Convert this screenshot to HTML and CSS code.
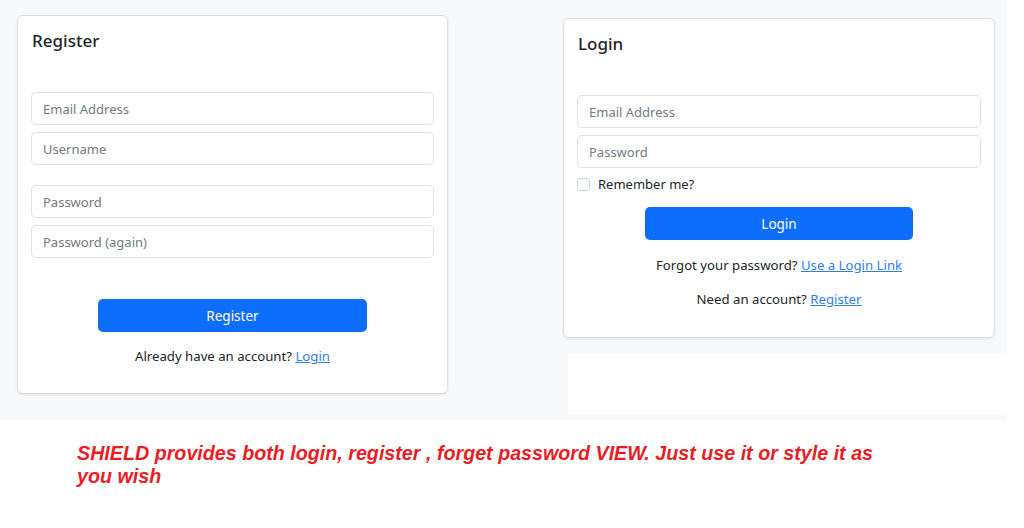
FILE: index.html
```html
<!DOCTYPE html>
<html lang="en">
<head>
    <meta charset="UTF-8">
    <title>Shield auth views</title>
    <link rel="stylesheet" href="styles.css">
</head>
<body>
    <div class="shots">
        <div class="shot shot-left">
            <div class="card card-register">
                <h5 class="card-title">Register</h5>
                <form class="auth-form">
                    <input type="email" class="form-control" placeholder="Email Address">
                    <input type="text" class="form-control gap-sm" placeholder="Username">
                    <input type="password" class="form-control gap-lg" placeholder="Password">
                    <input type="password" class="form-control gap-sm" placeholder="Password (again)">
                    <button type="button" class="btn-primary btn-register">Register</button>
                    <p class="helper helper-register">Already have an account? <a href="#">Login</a></p>
                </form>
            </div>
        </div>
        <div class="shot shot-right">
            <div class="card card-login">
                <h5 class="card-title">Login</h5>
                <form class="auth-form">
                    <input type="email" class="form-control" placeholder="Email Address">
                    <input type="password" class="form-control gap-sm" placeholder="Password">
                    <label class="check">
                        <input type="checkbox" class="check-input">
                        <span>Remember me?</span>
                    </label>
                    <button type="button" class="btn-primary btn-login">Login</button>
                    <p class="helper helper-forgot">Forgot your password? <a href="#">Use a Login Link</a></p>
                    <p class="helper helper-need">Need an account? <a href="#">Register</a></p>
                </form>
            </div>
            <div class="blank"></div>
        </div>
    </div>

    <p class="note">SHIELD provides both login, register , forget password VIEW. Just use it or style it as you wish</p>
</body>
</html>
```

FILE: styles.css
```css
body {
    margin: 0;
    background: #fff;
    font-family: "Noto Sans", "Open Sans", Arial, sans-serif;
    color: #212529;
}

.shots {
    display: flex;
    width: 1007px;
    height: 420px;
    background: #f8f9fa;
}

.shot-left {
    width: 563px;
    padding: 15px 0 0 17px;
    box-sizing: border-box;
}

.shot-right {
    flex: 1;
    display: flex;
    flex-direction: column;
    align-items: flex-start;
}

.card {
    background: #fff;
    border: 1px solid #dcdfe2;
    border-radius: 6px;
    box-shadow: 0 1px 3px rgba(0, 0, 0, 0.08);
    box-sizing: border-box;
    padding: 14px 13px 0 13px;
}

.card-register {
    width: 431px;
    height: 379px;
}

.card-login {
    width: 432px;
    height: 320px;
    margin-top: 18px;
}

.blank {
    width: 439px;
    height: 62px;
    margin: 15px 0 0 5px;
    background: #fff;
}

.card-title {
    margin: 0 0 0 1px;
    font-size: 17px;
    font-weight: 500;
    line-height: 22px;
    color: #212529;
}

.auth-form {
    display: flex;
    flex-direction: column;
    margin-top: 40px;
}

.form-control {
    height: 33px;
    box-sizing: border-box;
    width: 100%;
    margin: 0;
    padding: 0 11px;
    border: 1px solid #dee2e6;
    border-radius: 5px;
    font-family: inherit;
    font-size: 13px;
    color: #212529;
    background: #fff;
}

.form-control::placeholder {
    color: #737a81;
}

.gap-sm {
    margin-top: 7px;
}

.gap-lg {
    margin-top: 20px;
}

.check {
    display: flex;
    align-items: center;
    gap: 8px;
    margin-top: 8px;
    font-size: 13px;
    line-height: 16px;
}

.check-input {
    width: 13px;
    height: 13px;
    margin: 0;
    appearance: none;
    border: 1px solid #ced4da;
    border-radius: 3px;
    background: #fff;
}

.btn-primary {
    align-self: center;
    height: 33px;
    border: none;
    border-radius: 5px;
    background: #0d6efd;
    color: #fff;
    font-family: inherit;
    font-size: 13.5px;
}

.btn-register {
    width: 269px;
    margin-top: 41px;
}

.btn-login {
    width: 268px;
    margin-top: 15px;
}

.helper {
    margin: 0;
    text-align: center;
    font-size: 13.2px;
    line-height: 18px;
}

.helper a {
    color: #2f7df6;
}

.helper-register {
    margin-top: 15px;
}

.helper-forgot {
    margin-top: 16px;
}

.helper-need {
    margin-top: 16px;
}

.note {
    width: 820px;
    margin: 22px 0 0 77px;
    font-family: "Liberation Sans", Arial, sans-serif;
    font-size: 19.7px;
    font-weight: bold;
    font-style: italic;
    line-height: 23px;
    color: #ec1c24;
}
```
